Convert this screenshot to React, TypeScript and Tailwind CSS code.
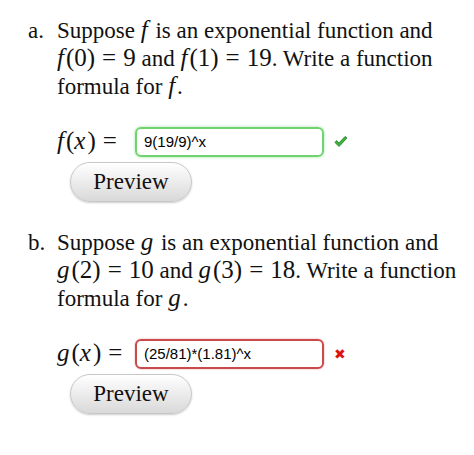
import React from "react";

// math (MathJax-like) pieces render a touch larger than body text
const Mv = ({ children }: { children: React.ReactNode }) => (
  <span className="italic pr-[2px] text-[25px] leading-none font-['Liberation_Serif',serif]">{children}</span>
);

const Mn = ({ children }: { children: React.ReactNode }) => (
  <span className="text-[25px] leading-none">{children}</span>
);

const Eq = () => <span className="mx-[7px] text-[25px] leading-none">=</span>;

const Check = () => (
  <svg width="14" height="12" viewBox="0 0 14 12" className="ml-[10px]">
    <path d="M1 6.5 L5 10.5 L13 2 L11 0.5 L5 7 L2.5 4.5 Z" fill="#3bb53b" stroke="#1f7a1f" strokeWidth="0.8" strokeLinejoin="round" />
  </svg>
);

const Cross = () => (
  <span className="ml-[10px] text-[14px] leading-none text-[#dd1111] font-['DejaVu_Sans',sans-serif]">✖</span>
);

function AnswerRow({
  label,
  value,
  ok,
}: {
  label: string;
  value: string;
  ok: boolean;
}) {
  return (
    <div className="flex items-center h-[30px]">
      <span className="w-[78px] shrink-0 whitespace-nowrap">
        <Mv>{label}</Mv>
        <Mn>(</Mn>
        <Mv>x</Mv>
        <Mn>)</Mn>
        <Eq />
      </span>
      <div
        className={
          ok
            ? "h-[30px] w-[189px] rounded-[6px] border-2 border-[#6fd46f] shadow-[0_0_3px_#9be39b] flex items-center px-[7px]"
            : "h-[30px] w-[189px] rounded-[6px] border-2 border-[#c94a4a] shadow-[0_0_2px_#e39b9b] flex items-center px-[7px]"
        }
      >
        <span className="font-['Liberation_Sans',sans-serif] text-[15px] text-black">{value}</span>
      </div>
      {ok ? <Check /> : <Cross />}
    </div>
  );
}

const Preview = () => (
  <button className="ml-[13px] mt-[5px] h-[40px] w-[122px] rounded-full border border-[#c8c8c8] bg-gradient-to-b from-[#ffffff] to-[#d9d9d9] shadow-[0_1px_2px_rgba(0,0,0,0.2)] text-[23px] text-[#111] font-['Liberation_Serif',serif]">
    Preview
  </button>
);

function Question({
  letter,
  lines,
  answer,
}: {
  letter: string;
  lines: React.ReactNode[];
  answer: React.ReactNode;
}) {
  return (
    <div className="flex">
      <span className="w-[29px] shrink-0">{letter}</span>
      <div>
        {lines.map((l, i) => (
          <p key={i} className="whitespace-nowrap">
            {l}
          </p>
        ))}
        <div className="mt-[26px]">{answer}</div>
      </div>
    </div>
  );
}

export default function App() {
  return (
    <div className="w-[474px] h-[455px] bg-white text-[#111] font-['Liberation_Serif',serif] text-[23px] leading-[28px] pl-[28px] pt-[17px]">
      <Question
        letter="a."
        lines={[
          <>Suppose <Mv>f</Mv> is an exponential function and</>,
          <>
            <Mv>f</Mv><Mn>(0)</Mn><Eq /><Mn>9</Mn> and <Mv>f</Mv><Mn>(1)</Mn><Eq /><Mn>19</Mn>. Write a function
          </>,
          <>formula for <Mv>f</Mv>.</>,
        ]}
        answer={
          <>
            <AnswerRow label="f" value="9(19/9)^x" ok />
            <Preview />
          </>
        }
      />
      <div className="h-[27px]" />
      <Question
        letter="b."
        lines={[
          <>Suppose <Mv>g</Mv> is an exponential function and</>,
          <>
            <Mv>g</Mv><Mn>(2)</Mn><Eq /><Mn>10</Mn> and <Mv>g</Mv><Mn>(3)</Mn><Eq /><Mn>18</Mn>. Write a function
          </>,
          <>formula for <Mv>g</Mv>.</>,
        ]}
        answer={
          <>
            <AnswerRow label="g" value="(25/81)*(1.81)^x" ok={false} />
            <Preview />
          </>
        }
      />
    </div>
  );
}
